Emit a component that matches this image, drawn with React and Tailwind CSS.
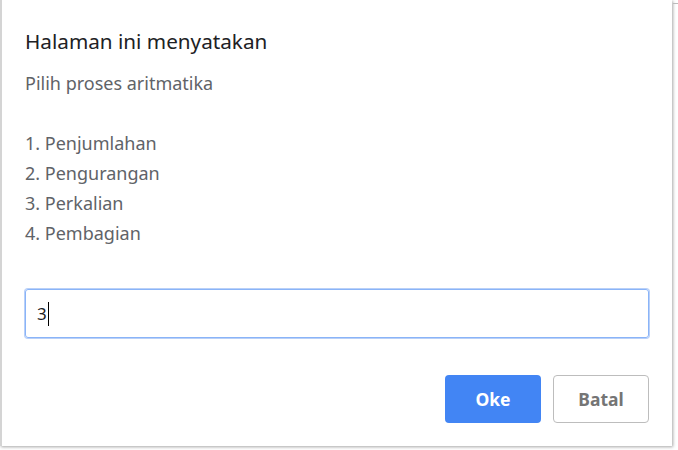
import React from "react";

const font = { fontFamily: '"Noto Sans", "Open Sans", sans-serif' };

export default function App() {
  return (
    <div className="w-[678px] h-[450px] bg-white overflow-hidden relative" style={font}>
      {/* dialog */}
      <div className="w-[672px] h-[446px] bg-white border-l-2 border-[#d4d4d4] shadow-[1px_1px_3px_rgba(0,0,0,0.35)] flex flex-col pl-[23px] pr-[23px]">
        <div className="pt-[27px] text-[20.7px] leading-[28px] text-[#202124]">Halaman ini menyatakan</div>
        <div className="mt-[13px] text-[18px] leading-[30px] text-[#5f6368]">
          <div>Pilih proses aritmatika</div>
          <div className="h-[30px]" />
          <div>1. Penjumlahan</div>
          <div>2. Pengurangan</div>
          <div>3. Perkalian</div>
          <div>4. Pembagian</div>
        </div>
        <div className="mt-[41px] h-[49px] border border-[#8ab4f8] rounded-[3px] shadow-[0_0_0_1px_#b9d0f8] flex items-center px-[11px] text-[17px] text-[#202124]">
          <span>3</span>
          <span className="w-px h-[24px] bg-black ml-[1px]" />
        </div>
        <div className="mt-[37px] flex justify-end gap-[12px]">
          <button className="w-[96px] h-[48px] rounded-[4px] bg-[#4285f4] text-white font-bold text-[17.5px]">Oke</button>
          <button className="w-[96px] h-[48px] rounded-[4px] border border-[#bdbdbd] bg-white text-[#757575] font-bold text-[17.5px]">Batal</button>
        </div>
      </div>
      <div className="absolute right-0 top-[3px] w-[5px] h-px bg-[#bbb]" />
    </div>
  );
}
